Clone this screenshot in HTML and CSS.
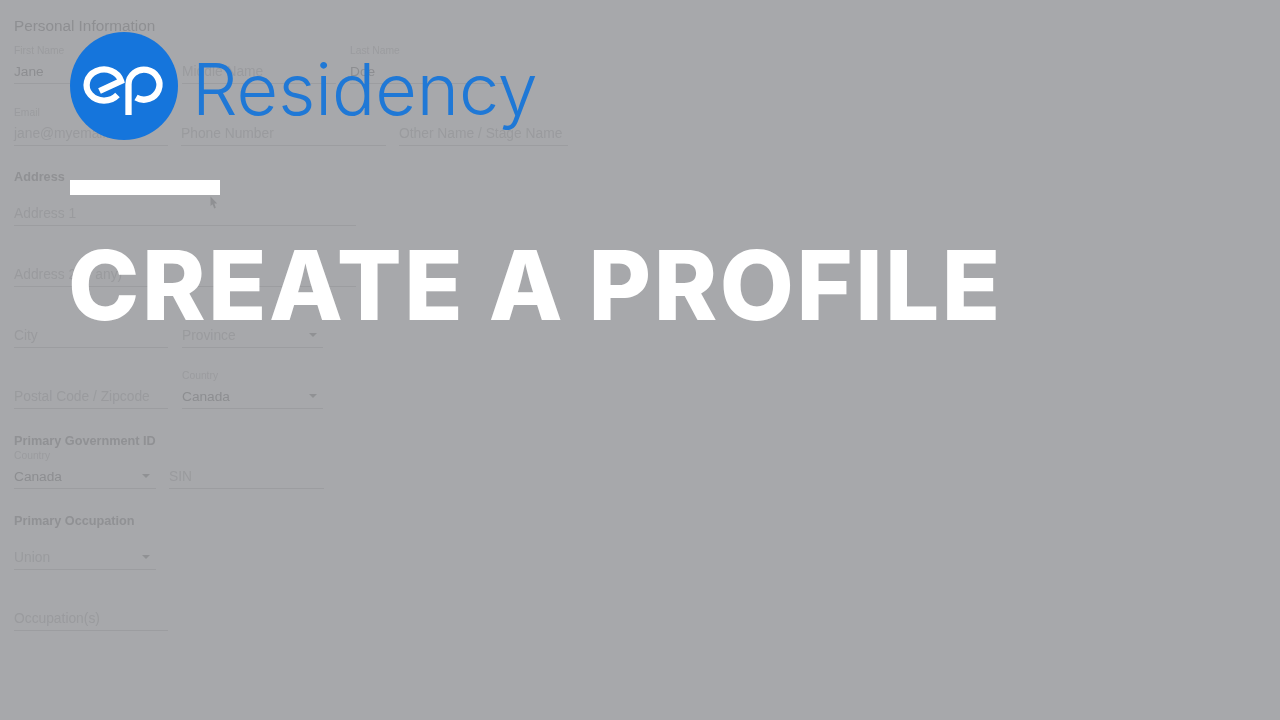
FILE: index.html
```html
<!DOCTYPE html>
<html lang="en">
<head>
<meta charset="utf-8">
<title>Create a Profile</title>
<link rel="stylesheet" href="styles.css">
</head>
<body>
<main class="form">
  <h2 class="form-title">Personal Information</h2>
  <div class="row row-name">
    <div class="field w154"><span class="label">First Name</span><span class="value">Jane</span></div>
    <div class="field w154"><span class="ph">Middle Name</span></div>
    <div class="field w154"><span class="label">Last Name</span><span class="value">Doe</span></div>
  </div>
  <div class="row row-contact">
    <div class="field w154"><span class="label">Email</span><span class="ph">jane@myemail.com</span></div>
    <div class="field w205"><span class="ph">Phone Number</span></div>
    <div class="field w169"><span class="ph">Other Name / Stage Name</span></div>
  </div>
  <h3 class="section s-address">Address</h3>
  <div class="row row-a1"><div class="field w342"><span class="ph">Address 1</span></div></div>
  <div class="row row-std"><div class="field w342"><span class="ph">Address 2 (if any)</span></div></div>
  <div class="row row-std">
    <div class="field w154"><span class="ph">City</span></div>
    <div class="field w141 select"><span class="ph">Province</span><i class="caret"></i></div>
  </div>
  <div class="row row-std">
    <div class="field w154"><span class="ph">Postal Code / Zipcode</span></div>
    <div class="field w141 select"><span class="label">Country</span><span class="value">Canada</span><i class="caret"></i></div>
  </div>
  <h3 class="section s-gov">Primary Government ID</h3>
  <div class="row row-gov">
    <div class="field w142 select"><span class="label">Country</span><span class="value">Canada</span><i class="caret"></i></div>
    <div class="field w155"><span class="ph">SIN</span></div>
  </div>
  <h3 class="section s-occ">Primary Occupation</h3>
  <div class="row row-union"><div class="field w142 select"><span class="ph">Union</span><i class="caret"></i></div></div>
  <div class="row row-std"><div class="field w154"><span class="ph">Occupation(s)</span></div></div>
</main>

<svg class="cursor" viewBox="0 0 8 14" aria-hidden="true"><path d="M0.5 0.5 L0.5 10 L2.6 8.2 L4.2 12.5 L5.8 11.8 L4.3 7.6 L7.2 7.4 Z"/></svg>

<section class="overlay">
  <div class="brand">
    <svg class="logo" viewBox="0 0 108 108" aria-hidden="true">
      <circle cx="54" cy="54" r="54" class="logo-disc"/>
      <path class="logo-mark" d="M29.500 59 L51 49 A17.500 15.500 0 1 0 47.500 63"/>
      <path class="logo-mark" d="M58.500 83 L58.500 52.500 A15.500 15 0 1 1 66 65.500"/>
    </svg>
    <span class="wordmark">Residency</span>
  </div>
  <div class="bar"></div>
  <h1 class="headline">CREATE A PROFILE</h1>
</section>
</body>
</html>
```
FILE: styles.css
```css
* { box-sizing: border-box; }
html, body { margin: 0; height: 100%; }
body {
  position: relative;
  width: 1280px;
  height: 720px;
  overflow: hidden;
  background: #a7a8ab;
  font-family: "Liberation Sans", Arial, sans-serif;
}
.form { padding: 17px 0 0 14px; filter: blur(0.5px); }
.form-title { margin: 0; font-size: 15.300px; line-height: 18px; font-weight: 400; color: #8e8f92; }
.row { display: flex; gap: 14px; align-items: stretch; }
.row-name { height: 49px; }
.row-contact { height: 62px; gap: 13px; }
.row-a1 { height: 41px; }
.row-std { height: 61px; }
.row-gov { height: 40px; gap: 13px; }
.row-union { height: 41px; }
.section { margin: 0; font-size: 12.700px; line-height: 16px; font-weight: 700; color: #909194; }
.s-address { margin-top: 23px; }
.s-gov { margin-top: 24px; }
.s-occ { margin-top: 24px; }
.field {
  position: relative;
  display: flex;
  flex-direction: column;
  justify-content: flex-end;
  border-bottom: 1px solid #9c9da0;
  padding-bottom: 3px;
}
.w141 { width: 141px; }
.w142 { width: 142px; }
.w154 { width: 154px; }
.w155 { width: 155px; }
.w169 { width: 169px; }
.w205 { width: 205px; }
.w342 { width: 342px; }
.label { font-size: 10.300px; line-height: 12px; color: #9b9c9f; margin-bottom: 7px; }
.value { font-size: 13.700px; line-height: 16px; color: #8d8e91; }
.ph { font-size: 13.800px; line-height: 16px; color: #9a9b9e; white-space: nowrap; }
.select .value, .select .ph { padding-right: 18px; }
.caret {
  position: absolute;
  right: 6px;
  bottom: 10px;
  border-left: 4px solid transparent;
  border-right: 4px solid transparent;
  border-top: 4px solid #909194;
}
.cursor { position: absolute; left: 210px; top: 196px; width: 8px; height: 14px; filter: blur(0.6px); }
.cursor path { fill: #8f9093; }
.overlay { position: absolute; left: 70px; top: 32px; display: flex; flex-direction: column; align-items: flex-start; }
.brand { display: flex; align-items: center; gap: 14px; height: 108px; }
.logo { width: 108px; height: 108px; display: block; flex: none; }
.logo-disc { fill: #1575dc; }
.logo-mark { fill: none; stroke: #fff; stroke-width: 6.300; }
.wordmark { font-family: Inter, sans-serif; font-weight: 300; font-size: 71.800px; line-height: 108px; color: #1f78d6; margin-top: 5px; }
.bar { width: 150px; height: 15px; background: #fff; margin-top: 40px; }
.headline { margin: 35px 0 0 -2px; font-family: Inter, sans-serif; font-weight: 800; font-size: 96px; line-height: 110px; letter-spacing: 2.500px; color: #fff; white-space: nowrap; }
```
